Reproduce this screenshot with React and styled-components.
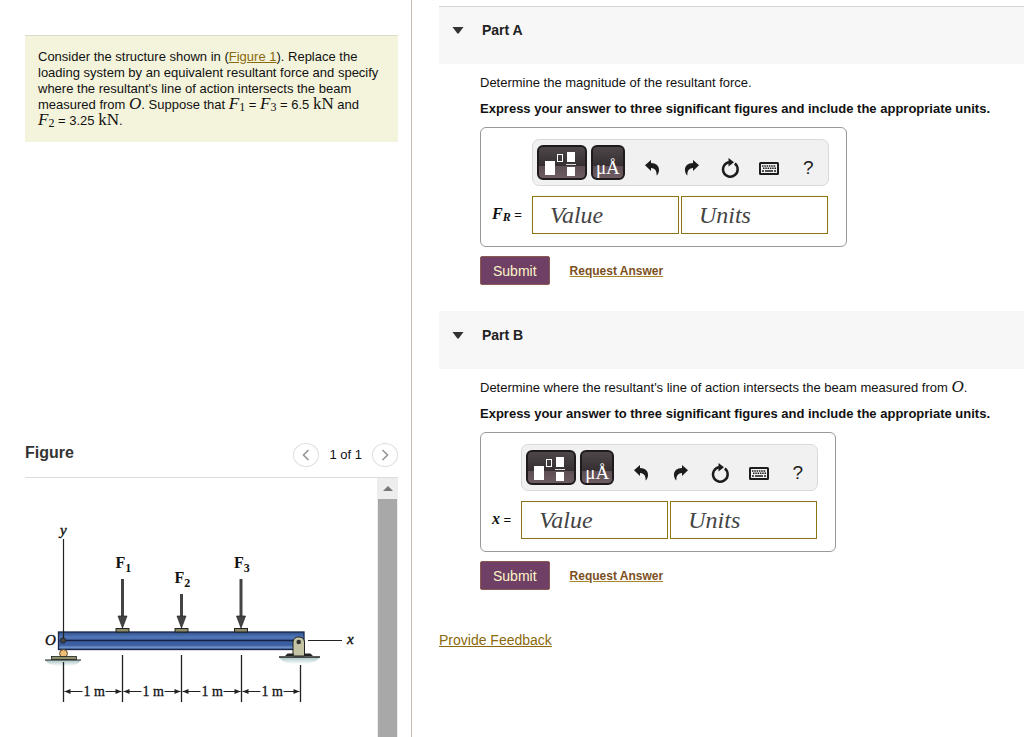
import React, { useId, useState } from 'react';
import styled, { createGlobalStyle } from 'styled-components';

const GlobalStyle = createGlobalStyle`
    * { box-sizing: border-box; }
    body {
        margin: 0;
        background: #fff;
        color: #111;
        font-family: "Liberation Sans", Arial, sans-serif;
        font-size: 13px;
        line-height: 16px;
    }
    button, input { font-family: inherit; margin: 0; }
    button { cursor: pointer; }
    a { color: #8a6a0c; }
`;

const Page = styled.div`
    display: grid;
    grid-template-columns: 103fr 153fr;
    min-height: 100vh;
`;

const Sidebar = styled.aside`
    display: grid;
    grid-template-rows: 1fr 300px;
    min-width: 0;
    padding: 0 13px 0 25px;
    border-right: 1px solid #ccb9a6;
`;

const Problem = styled.section`
    align-self: start;
    margin-top: 35px;
    padding: 13px;
    background: #f4f4dc;
    border-top: 1px solid #d9d9cc;

    p { margin: 0; }
`;

const Math = styled.span`
    font-family: "Liberation Serif", serif;
    font-size: 17px;
    line-height: 1px;

    sub {
        font-size: 12px;
        line-height: 1px;
        vertical-align: -2px;
    }
`;

const Equation = styled.span`
    white-space: nowrap;
`;

const FigurePanel = styled.section`
    display: flex;
    flex-direction: column;
    min-height: 0;
`;

const FigureHeader = styled.header`
    display: flex;
    align-items: center;
    justify-content: space-between;
    height: 41px;
    border-bottom: 1px solid #dcdcdc;

    h2 {
        margin: 0 0 8px;
        font-size: 16px;
        color: #333;
    }
`;

const Pager = styled.nav`
    display: flex;
    align-items: center;
    gap: 10px;
    margin-bottom: 4px;
`;

const PagerButton = styled.button`
    display: flex;
    align-items: center;
    justify-content: center;
    width: 26px;
    height: 24px;
    padding: 0;
    background: #fff;
    border: 1px solid #dedede;
    border-radius: 50%;
`;

const FigureBody = styled.div`
    display: flex;
    flex: 1;
    min-height: 0;

    > svg { flex: 1; min-width: 0; }
`;

const ScrollTrack = styled.div`
    display: flex;
    flex-direction: column;
    width: 21px;
    padding: 0 1px;
    background: #ededed;
`;

const ScrollArrow = styled.div`
    display: flex;
    align-items: center;
    justify-content: center;
    height: 21px;
`;

const ScrollThumb = styled.div`
    flex: 1;
    background: #a8a8a8;
`;

const Main = styled.main`
    min-width: 0;
    padding: 6px 0 0 27px;
`;

const PartHeader = styled.header`
    height: 58px;
    padding-top: 15px;
    background: #f7f7f7;
    border-top: 1px solid ${(props) => (props.$line ? '#d6d6d6' : '#f7f7f7')};

    h2 { margin: 0; font-size: 14px; line-height: 16px; }
`;

const PartToggle = styled.button`
    display: flex;
    align-items: center;
    gap: 18px;
    padding: 0 13px;
    background: none;
    border: 0;
    color: #222;
    font: inherit;
`;

const PartBody = styled.div`
    display: flex;
    flex-direction: column;
    align-items: flex-start;
    gap: 10px;
    padding: 11px 0 26px 41px;

    p { margin: 0; }
`;

const AnswerBox = styled.div`
    display: grid;
    grid-template-columns: auto auto;
    column-gap: 10px;
    row-gap: 10px;
    align-items: center;
    padding: 11px 17px 12px 11px;
    border: 1px solid #999;
    border-radius: 6px;
`;

const Toolbar = styled.div`
    grid-column: 2;
    display: flex;
    height: 47px;
    padding: 5px 0 5px 4px;
    background: #f1f1f1;
    border: 1px solid #d9d9d9;
    border-radius: 7px;
`;

const DarkButton = styled.button`
    display: flex;
    align-items: flex-end;
    justify-content: center;
    width: ${(props) => props.$width}px;
    height: 35px;
    margin-right: 4px;
    padding: 0;
    background: linear-gradient(#4d4749, #352f31 60%, #5d4f54 62%, #6d5c62);
    border: 2px solid #1f1b1c;
    border-radius: 6px;
    color: #fff;
    font-family: "Liberation Serif", serif;
    font-size: 19px;
    line-height: 20px;
`;

const ToolButtons = styled.div`
    display: flex;
    margin-left: 4px;
`;

const ToolButton = styled.button`
    display: flex;
    align-items: center;
    justify-content: center;
    width: 39px;
    padding: 11px 0 0;
    background: none;
    border: 0;
    color: #1c1c1c;
    font-size: 19px;
    line-height: 20px;
`;

const AnswerLabel = styled.label`
    font-size: 13px;

    i { font: italic bold 16px "Liberation Serif", serif; line-height: 1px; }
    sub { font: italic bold 12px "Liberation Serif", serif; line-height: 1px; vertical-align: -2px; }
`;

const Fields = styled.div`
    display: grid;
    grid-template-columns: 147px 147px;
    gap: 2px;
`;

const Field = styled.input`
    width: 100%;
    height: 38px;
    padding: 0 17px;
    background: #fff;
    border: 1px solid #8f7316;
    border-radius: 0;
    font: italic 24px "Liberation Serif", serif;

    &::placeholder { color: #444; opacity: 1; }
`;

const Actions = styled.div`
    display: flex;
    align-items: center;
    gap: 20px;
    margin-top: -1px;

    a {
        color: #7c4f22;
        font-size: 12px;
        font-weight: bold;
        text-decoration-color: #a8862a;
    }
`;

const SubmitButton = styled.button`
    height: 29px;
    padding: 0 12px;
    background: #6f3f66;
    border: 1px solid #8a5a50;
    border-radius: 2px;
    color: #fcf6c6;
    font-size: 14px;
`;

const Feedback = styled.footer`
    padding: 16px 0 24px;
    font-size: 14px;
`;

const Chevron = ({ d }) => (
    <svg width="8" height="12" viewBox="0 0 8 12" fill="none" stroke="#999" strokeWidth="1.7">
        <path d={d} />
    </svg>
);

const TemplateIcon = () => (
    <svg width="46" height="31" viewBox="0 0 46 31">
        <rect x="6" y="14" width="10" height="14" fill="#fff" />
        <rect x="18.5" y="7.5" width="5" height="7" fill="none" stroke="#fff" />
        <rect x="28" y="5" width="8" height="10" fill="#fff" />
        <path d="M27 17.5h10" stroke="#ddd" />
        <rect x="28" y="20" width="8" height="9" fill="#fff" />
    </svg>
);

const arrowPath = 'M0 5.2 L6 0 V3 C11 3 14.5 6 14 10.5 C13.8 13 12.8 14.5 11.6 15.5 C11.9 11.5 10.5 8.2 6 8 V11 Z';

const UndoIcon = () => (
    <svg width="15" height="16" viewBox="0 0 15 16" fill="currentColor"><path d={arrowPath} /></svg>
);

const RedoIcon = () => (
    <svg width="15" height="16" viewBox="0 0 15 16" fill="currentColor">
        <path d={arrowPath} transform="translate(15 0) scale(-1 1)" />
    </svg>
);

const ResetIcon = () => (
    <svg width="18" height="20" viewBox="0 0 18 20">
        <path d="M13.8 5.6 A7.3 7.3 0 1 1 8 4.2" fill="none" stroke="currentColor" strokeWidth="2.5" />
        <path d="M7.5 0 L13 4.3 L7.5 8.5 Z" fill="currentColor" />
    </svg>
);

const KeyboardIcon = () => (
    <svg width="20" height="13" viewBox="0 0 20 13">
        <rect x="1" y="1" width="18" height="11" rx="0.5" fill="#f1f1f1" stroke="currentColor" strokeWidth="2" />
        <path d="M3 4h14M4 6.2h13" stroke="currentColor" strokeWidth="1.4" strokeDasharray="1.5 0.8" />
        <path d="M3 9h2M6 9h8M15 9h2" stroke="currentColor" strokeWidth="1.5" />
    </svg>
);

const Force = ({ x, top, sub }) => (
    <g>
        <text x={x - 7} y={top - 11} fontSize="16" fontWeight="bold">
            F<tspan fontSize="12" dy="4">{sub}</tspan>
        </text>
        <path d={`M${x} ${top}V618`} stroke="#444" strokeWidth="3" />
        <path d={`M${x - 4.5} 616h9L${x} 628Z`} fill="#444" stroke="#222" strokeWidth="0.7" />
        <rect x={x - 6.5} y="628.5" width="13" height="3.5" fill="#8c8a68" stroke="#222" />
    </g>
);

const Dimension = ({ from, to }) => (
    <g>
        <path d={`M${from + 1} 691.5H${from + 19}M${from + 42} 691.5H${to - 1}`} stroke="#222" />
        <path d={`M${from + 1} 691.5l6 -2.5v5zM${to - 1} 691.5l-6 -2.5v5z`} fill="#222" />
        <text x={from + 20} y="696" fontSize="14" stroke="#111" strokeWidth="0.3">1 m</text>
    </g>
);

const BeamDiagram = () => (
    <svg viewBox="25 478 352 259" preserveAspectRatio="xMinYMin meet" fontFamily="Liberation Serif, serif" fill="#111" role="img" aria-label="Beam with three loads">
        <defs>
            <linearGradient id="steel" x1="0" y1="0" x2="0" y2="1">
                <stop offset="0" stopColor="#2f4f8d" />
                <stop offset="0.3" stopColor="#5278b8" />
                <stop offset="0.48" stopColor="#3d62a5" />
                <stop offset="0.75" stopColor="#3a5da0" />
                <stop offset="0.88" stopColor="#6f93c9" />
                <stop offset="1" stopColor="#38599a" />
            </linearGradient>
            <linearGradient id="ground" x1="0" y1="0" x2="0" y2="1">
                <stop offset="0" stopColor="#a5c2c2" />
                <stop offset="1" stopColor="#fff" />
            </linearGradient>
        </defs>

        <path d="M45 660h36q-4 7 -18 6q-14 1 -18 -6z" fill="url(#ground)" />
        <path d="M279 657h41q-5 8 -21 7q-16 1 -20 -7z" fill="url(#ground)" />

        <rect x="58.5" y="632" width="245.5" height="17.5" fill="url(#steel)" stroke="#1b2747" strokeWidth="1.3" />
        <path d="M63 640.5H300" stroke="#172243" strokeWidth="1.3" />
        <path d="M63.5 539V640" stroke="#222" strokeWidth="1.2" />
        <circle cx="63" cy="640.5" r="2.7" fill="#444" stroke="#111" strokeWidth="0.6" />
        <path d="M308 640.5H342" stroke="#222" />

        <circle cx="63.5" cy="653.5" r="3.9" fill="#edbf78" stroke="#5b4524" />
        <rect x="51.5" y="656.5" width="25" height="3" fill="#8d926b" stroke="#222" strokeWidth="0.8" />
        <path d="M45 660H81" stroke="#222" />

        <path d="M293 656V642a5.8 5.8 0 0 1 11.5 0V656z" fill="#c4c4a5" stroke="#222" />
        <circle cx="298.7" cy="642" r="2.3" fill="#333" />
        <path d="M285 656l2.5 -2.5h6V656zM304.5 656v-2.5h6L313 656z" fill="#222" />
        <path d="M279 657H320" stroke="#222" strokeWidth="1.4" />

        <Force x={122.5} top={579} sub="1" />
        <Force x={181.5} top={594} sub="2" />
        <Force x={241} top={579} sub="3" />

        <path d="M63.5 662V702M122.5 655V702M181.5 655V702M241.5 655V702M300.5 665V702" stroke="#222" strokeWidth="1.3" />
        <Dimension from={63.5} to={122.5} />
        <Dimension from={122.5} to={181.5} />
        <Dimension from={181.5} to={241.5} />
        <Dimension from={241.5} to={300.5} />

        <g fontStyle="italic" fontSize="15" stroke="#111" strokeWidth="0.4">
            <text x="60" y="535">y</text>
            <text x="45" y="645">O</text>
            <text x="347" y="644">x</text>
        </g>
    </svg>
);

const AnswerForm = ({ label }) => {
    const id = useId();
    return (
        <AnswerBox>
            <Toolbar>
                <DarkButton $width={50} type="button" aria-label="Templates"><TemplateIcon /></DarkButton>
                <DarkButton $width={34} type="button">μÅ</DarkButton>
                <ToolButtons>
                    <ToolButton type="button" aria-label="Undo"><UndoIcon /></ToolButton>
                    <ToolButton type="button" aria-label="Redo"><RedoIcon /></ToolButton>
                    <ToolButton type="button" aria-label="Reset"><ResetIcon /></ToolButton>
                    <ToolButton type="button" aria-label="Keyboard shortcuts"><KeyboardIcon /></ToolButton>
                    <ToolButton type="button">?</ToolButton>
                </ToolButtons>
            </Toolbar>
            <AnswerLabel htmlFor={id}>{label} =</AnswerLabel>
            <Fields>
                <Field id={id} placeholder="Value" />
                <Field aria-label="Units" placeholder="Units" />
            </Fields>
        </AnswerBox>
    );
};

const Part = ({ title, line, question, label }) => {
    const [open, setOpen] = useState(true);
    return (
        <section>
            <PartHeader $line={line}>
                <h2>
                    <PartToggle type="button" aria-expanded={open} onClick={() => setOpen(!open)}>
                        <svg width="12" height="7" viewBox="0 0 12 7" fill="#333">
                            <path d="M0.5 0h11L6.8 6.3q-0.8 0.7 -1.6 0z" />
                        </svg>
                        {title}
                    </PartToggle>
                </h2>
            </PartHeader>
            {open && (
                <PartBody>
                    <p>{question}</p>
                    <p><b>Express your answer to three significant figures and include the appropriate units.</b></p>
                    <AnswerForm label={label} />
                    <Actions>
                        <SubmitButton type="submit">Submit</SubmitButton>
                        <a href="#answer">Request Answer</a>
                    </Actions>
                </PartBody>
            )}
        </section>
    );
};

const App = () => {
    return (
        <Page>
            <GlobalStyle />
            <Sidebar>
                <Problem>
                    <p>
                        Consider the structure shown in (<a href="#figure">Figure 1</a>). Replace the
                        loading system by an equivalent resultant force and specify
                        where the resultant's line of action intersects the beam
                        measured from <Math><i>O</i></Math>. Suppose that <Math><i>F</i><sub>1</sub></Math> = <Math><i>F</i><sub>3</sub></Math> = 6.5 <Math>kN</Math> and{' '}
                        <Equation><Math><i>F</i><sub>2</sub></Math> = 3.25 <Math>kN</Math>.</Equation>
                    </p>
                </Problem>
                <FigurePanel id="figure">
                    <FigureHeader>
                        <h2>Figure</h2>
                        <Pager>
                            <PagerButton type="button" aria-label="Previous figure"><Chevron d="M6.5 1L1.5 6l5 5" /></PagerButton>
                            <span>1 of 1</span>
                            <PagerButton type="button" aria-label="Next figure"><Chevron d="M1.5 1l5 5l-5 5" /></PagerButton>
                        </Pager>
                    </FigureHeader>
                    <FigureBody>
                        <BeamDiagram />
                        <ScrollTrack>
                            <ScrollArrow>
                                <svg width="10" height="5" viewBox="0 0 10 5" fill="#777"><path d="M0 5L5 0l5 5z" /></svg>
                            </ScrollArrow>
                            <ScrollThumb />
                        </ScrollTrack>
                    </FigureBody>
                </FigurePanel>
            </Sidebar>
            <Main>
                <Part
                    title="Part A"
                    line
                    question="Determine the magnitude of the resultant force."
                    label={<><i>F</i><sub>R</sub></>}
                />
                <Part
                    title="Part B"
                    question={<>Determine where the resultant's line of action intersects the beam measured from <Math><i>O</i></Math>.</>}
                    label={<i>x</i>}
                />
                <Feedback><a href="#feedback">Provide Feedback</a></Feedback>
            </Main>
        </Page>
    );
};

export default App;
